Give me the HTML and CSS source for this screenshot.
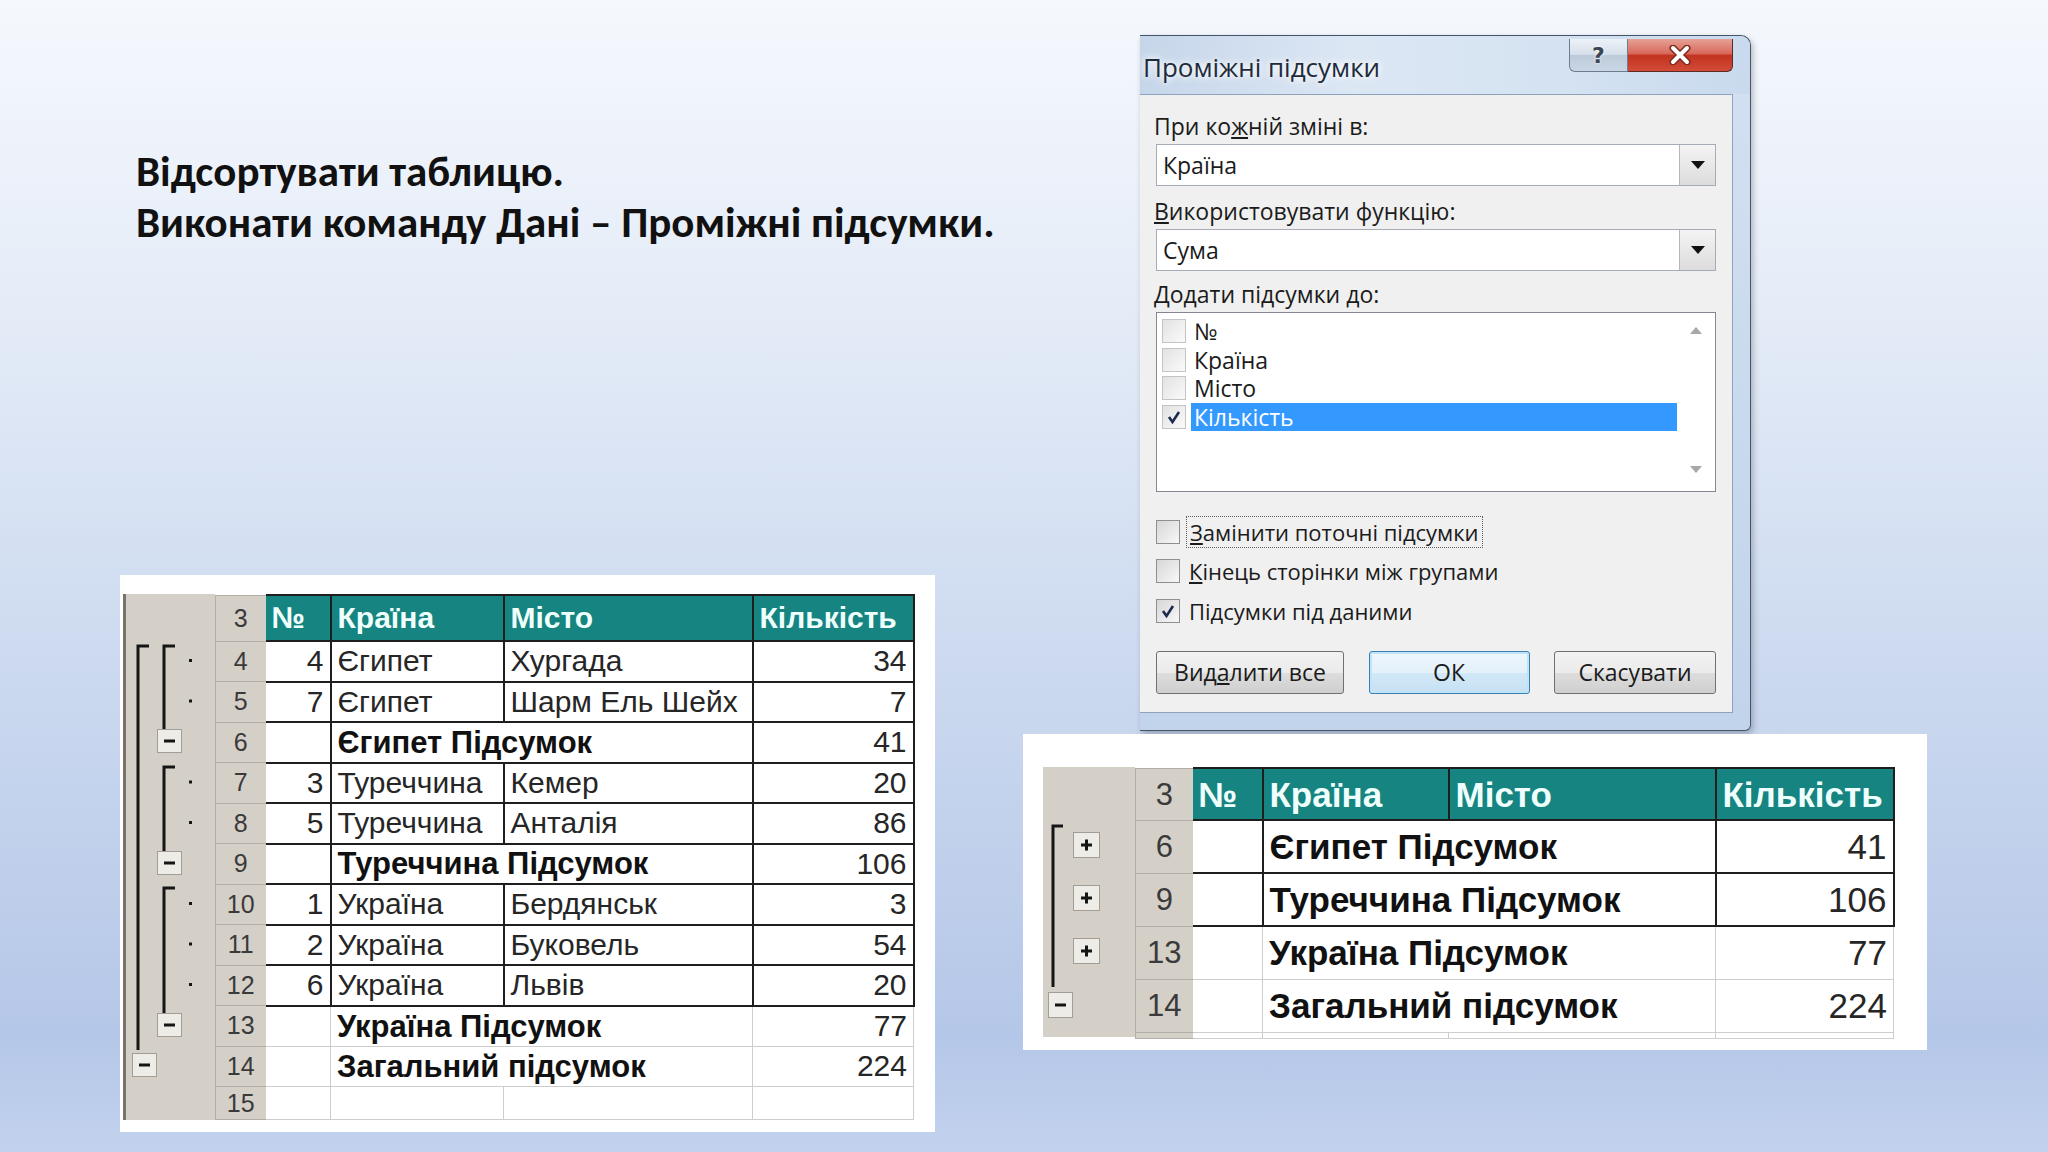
FILE: index.html
```html
<!DOCTYPE html>
<html lang="uk">
<head>
    <meta charset="UTF-8">
    <title>Проміжні підсумки</title>
    <link rel="stylesheet" href="styles.css">
</head>
<body>
<div class="slide">
    <!-- left column: task + expanded sheet -->
    <div class="col-left">
        <div class="task">
            <p>Відсортувати таблицю.</p>
            <p>Виконати команду Дані – Проміжні підсумки.</p>
        </div>

        <div class="sheet sheet-full">
            <svg class="outline" width="92" height="526" viewBox="0 0 92 526">
                <rect x="0" y="0" width="3" height="526" fill="#77736c"/>
                <g fill="none" stroke="#151515" stroke-width="3">
                    <path d="M26 52 H15 V456"/>
                    <path d="M52 52 H41 V135"/>
                    <path d="M52 173 H41 V257"/>
                    <path d="M52 294 H41 V419"/>
                </g>
                <g fill="#eeece6" stroke="#a29e96">
                    <rect x="34.5" y="135.5" width="24" height="23"/>
                    <rect x="34.5" y="257.5" width="24" height="23"/>
                    <rect x="34.5" y="419.5" width="24" height="23"/>
                    <rect x="9.5" y="459.5" width="24" height="23"/>
                </g>
                <g fill="#151515">
                    <rect x="41" y="145.5" width="11" height="3"/>
                    <rect x="41" y="267.5" width="11" height="3"/>
                    <rect x="41" y="429.5" width="11" height="3"/>
                    <rect x="16" y="469.5" width="11" height="3"/>
                    <rect x="66" y="65" width="3" height="3"/>
                    <rect x="66" y="105.5" width="3" height="3"/>
                    <rect x="66" y="186.5" width="3" height="3"/>
                    <rect x="66" y="227" width="3" height="3"/>
                    <rect x="66" y="308" width="3" height="3"/>
                    <rect x="66" y="348.5" width="3" height="3"/>
                    <rect x="66" y="389" width="3" height="3"/>
                </g>
            </svg>
            <table class="grid grid-full">
                <colgroup>
                    <col class="c-rn"><col class="c-no"><col class="c-country"><col class="c-city"><col class="c-qty">
                </colgroup>
                <tr class="r-head"><td class="rn">3</td><th>№</th><th>Країна</th><th>Місто</th><th>Кількість</th></tr>
                <tr><td class="rn">4</td><td class="num">4</td><td>Єгипет</td><td>Хургада</td><td class="num">34</td></tr>
                <tr><td class="rn">5</td><td class="num">7</td><td>Єгипет</td><td>Шарм Ель Шейх</td><td class="num">7</td></tr>
                <tr class="sub"><td class="rn">6</td><td></td><td colspan="2">Єгипет Підсумок</td><td class="num">41</td></tr>
                <tr><td class="rn">7</td><td class="num">3</td><td>Туреччина</td><td>Кемер</td><td class="num">20</td></tr>
                <tr><td class="rn">8</td><td class="num">5</td><td>Туреччина</td><td>Анталія</td><td class="num">86</td></tr>
                <tr class="sub"><td class="rn">9</td><td></td><td colspan="2">Туреччина Підсумок</td><td class="num">106</td></tr>
                <tr><td class="rn">10</td><td class="num">1</td><td>Україна</td><td>Бердянськ</td><td class="num">3</td></tr>
                <tr><td class="rn">11</td><td class="num">2</td><td>Україна</td><td>Буковель</td><td class="num">54</td></tr>
                <tr><td class="rn">12</td><td class="num">6</td><td>Україна</td><td>Львів</td><td class="num">20</td></tr>
                <tr class="sub plain"><td class="rn">13</td><td></td><td colspan="2">Україна Підсумок</td><td class="num">77</td></tr>
                <tr class="sub plain"><td class="rn">14</td><td></td><td colspan="2">Загальний підсумок</td><td class="num">224</td></tr>
                <tr class="plain r-last"><td class="rn">15</td><td></td><td></td><td></td><td></td></tr>
            </table>
        </div>
    </div>

    <!-- right column: dialog + collapsed sheet -->
    <div class="col-right">
        <div class="dialog">
            <div class="titlebar">
                <span class="title">Проміжні підсумки</span>
                <div class="caption-btns">
                    <span class="cap-btn cap-help">?</span>
                    <span class="cap-btn cap-close">
                        <svg width="28" height="20" viewBox="0 0 28 20">
                            <path d="M7 3 L21 17 M21 3 L7 17" stroke="#7b2b22" stroke-width="7" stroke-linecap="round"/>
                            <path d="M7 3 L21 17 M21 3 L7 17" stroke="#fff" stroke-width="4" stroke-linecap="round"/>
                        </svg>
                    </span>
                </div>
            </div>

            <div class="dlg-body">
                <label class="dlg-label">При ко<u>ж</u>ній зміні в:</label>
                <div class="combo">
                    <span class="combo-value">Країна</span>
                    <span class="combo-drop"><svg width="14" height="8" viewBox="0 0 14 8"><path d="M0 0 H14 L7 8 Z" fill="#111"/></svg></span>
                </div>

                <label class="dlg-label gap-1"><u>В</u>икористовувати функцію:</label>
                <div class="combo">
                    <span class="combo-value">Сума</span>
                    <span class="combo-drop"><svg width="14" height="8" viewBox="0 0 14 8"><path d="M0 0 H14 L7 8 Z" fill="#111"/></svg></span>
                </div>

                <label class="dlg-label gap-2"><u>Д</u>одати підсумки до:</label>
                <div class="listbox">
                    <div class="list-items">
                        <div class="item"><span class="chk chk-soft"></span><span class="item-text">№</span></div>
                        <div class="item"><span class="chk chk-soft"></span><span class="item-text">Країна</span></div>
                        <div class="item"><span class="chk chk-soft"></span><span class="item-text">Місто</span></div>
                        <div class="item">
                            <span class="chk chk-soft"><svg width="16" height="16" viewBox="0 0 16 16"><path d="M3 8 L6.5 13 L13 3" fill="none" stroke="#1d2a4f" stroke-width="2.6"/></svg></span>
                            <span class="item-text sel">Кількість</span>
                        </div>
                    </div>
                    <div class="list-scroll">
                        <svg width="12" height="7" viewBox="0 0 12 7"><path d="M0 7 L6 0 L12 7 Z" fill="#a8a8a8"/></svg>
                        <svg width="12" height="7" viewBox="0 0 12 7"><path d="M0 0 L6 7 L12 0 Z" fill="#a8a8a8"/></svg>
                    </div>
                </div>

                <div class="options">
                    <div class="opt"><span class="chk"></span><span class="opt-text focus"><u>З</u>амінити поточні підсумки</span></div>
                    <div class="opt"><span class="chk"></span><span class="opt-text"><u>К</u>інець сторінки між групами</span></div>
                    <div class="opt">
                        <span class="chk"><svg width="16" height="16" viewBox="0 0 16 16"><path d="M3 8 L6.5 13 L13 3" fill="none" stroke="#1d2a4f" stroke-width="2.6"/></svg></span>
                        <span class="opt-text">Підсумки під даними</span>
                    </div>
                </div>

                <div class="dlg-buttons">
                    <span class="btn btn-wide">Вид<u>а</u>лити все</span>
                    <span class="btn btn-ok">ОК</span>
                    <span class="btn">Скасувати</span>
                </div>
            </div>
        </div>

        <div class="sheet sheet-short">
            <svg class="outline" width="92" height="270" viewBox="0 0 92 270">
                <path d="M20 59 H10 V220" fill="none" stroke="#151515" stroke-width="3"/>
                <g fill="#eeece6" stroke="#a29e96">
                    <rect x="30.5" y="65.5" width="26" height="25"/>
                    <rect x="30.5" y="118.5" width="26" height="25"/>
                    <rect x="30.5" y="171.5" width="26" height="25"/>
                    <rect x="5.5" y="225.5" width="24" height="25"/>
                </g>
                <g fill="#151515">
                    <rect x="38" y="76.5" width="11" height="3"/>
                    <rect x="42" y="72.5" width="3" height="11"/>
                    <rect x="38" y="129.5" width="11" height="3"/>
                    <rect x="42" y="125.5" width="3" height="11"/>
                    <rect x="38" y="182.5" width="11" height="3"/>
                    <rect x="42" y="178.5" width="3" height="11"/>
                    <rect x="12" y="236.5" width="11" height="3"/>
                </g>
            </svg>
            <table class="grid grid-short">
                <colgroup>
                    <col class="c-rn"><col class="c-no"><col class="c-country"><col class="c-city"><col class="c-qty">
                </colgroup>
                <tr class="r-head"><td class="rn">3</td><th>№</th><th>Країна</th><th>Місто</th><th>Кількість</th></tr>
                <tr class="sub"><td class="rn">6</td><td></td><td colspan="2">Єгипет Підсумок</td><td class="num">41</td></tr>
                <tr class="sub"><td class="rn">9</td><td></td><td colspan="2">Туреччина Підсумок</td><td class="num">106</td></tr>
                <tr class="sub plain"><td class="rn">13</td><td></td><td colspan="2">Україна Підсумок</td><td class="num">77</td></tr>
                <tr class="sub plain"><td class="rn">14</td><td></td><td colspan="2">Загальний підсумок</td><td class="num">224</td></tr>
                <tr class="plain r-last"><td class="rn"></td><td></td><td></td><td></td><td></td></tr>
            </table>
        </div>
    </div>
</div>
</body>
</html>
```

FILE: styles.css
```css
* {
    box-sizing: border-box;
}

body {
    margin: 0;
    font-family: "Liberation Sans", Arial, sans-serif;
}

/* Slide */
.slide {
    width: 2048px;
    height: 1152px;
    display: flex;
    overflow: hidden;
    background: linear-gradient(to bottom, #f5f8fd 0%, #e6edf8 25%, #cedbf0 55%, #b5c7e8 90%, #c2d2ee 100%);
}

.col-left {
    width: 1023px;
    padding-left: 120px;
}

.col-right {
    width: 904px;
}

.task {
    margin: 146px 0 0 16px;
    font-family: Carlito, Roboto, "Liberation Sans", sans-serif;
    font-weight: bold;
    font-size: 43px;
    line-height: 51px;
    color: #111;
}

.task p {
    margin: 0;
}

/* Sheet pictures */
.sheet {
    display: flex;
    align-items: flex-start;
    background: #fff;
}

.sheet-full {
    width: 815px;
    height: 557px;
    margin-top: 327px;
    padding: 19px 0 0 3px;
}

.sheet-short {
    width: 904px;
    height: 316px;
    margin-top: 3px;
    padding: 33px 0 0 20px;
}

.outline {
    display: block;
    flex-shrink: 0;
    background: #d4d0c8;
}

.grid {
    border-collapse: collapse;
    table-layout: fixed;
    color: #262626;
}

.grid td,
.grid th {
    padding: 0 6px;
    border: 2px solid #1e1e1e;
    white-space: nowrap;
    overflow: hidden;
    text-align: left;
    font-weight: normal;
    line-height: 1;
}

.grid th {
    background: #168480;
    color: #effffd;
    font-weight: bold;
}

.grid .rn {
    background: #d4d0c8;
    color: #3a3a3a;
    text-align: center;
    padding: 0;
    border: 1px solid #b3afa6;
    border-right-style: hidden;
}

.grid .num {
    text-align: right;
}

.grid .sub td[colspan] {
    font-weight: bold;
    color: #111;
}

.grid .plain td:not(.rn) {
    border: 1px solid #cdcdcd;
}

/* expanded sheet */
.grid-full {
    width: 698px;
    font-size: 30px;
}

.grid-full .rn {
    font-size: 25px;
}

.grid-full .sub td[colspan] {
    font-size: 31px;
}

.grid-full tr {
    height: 40.5px;
}

.grid-full .r-head {
    height: 46px;
}

.grid-full .r-last {
    height: 33px;
}

.grid-full .c-rn { width: 50px; }
.grid-full .c-no { width: 65px; }
.grid-full .c-country { width: 173px; }
.grid-full .c-city { width: 249px; }
.grid-full .c-qty { width: 161px; }

/* collapsed sheet */
.grid-short {
    width: 758px;
    font-size: 35px;
}

.grid-short .rn {
    font-size: 31px;
}

.grid-short tr {
    height: 53px;
}

.grid-short .r-head {
    height: 52px;
}

.grid-short .r-last {
    height: 6px;
}

.grid-short .c-rn { width: 57px; }
.grid-short .c-no { width: 70px; }
.grid-short .c-country { width: 186px; }
.grid-short .c-city { width: 267px; }
.grid-short .c-qty { width: 178px; }

/* Dialog */
.dialog {
    width: 611px;
    height: 696px;
    margin: 35px 0 0 117px;
    display: flex;
    flex-direction: column;
    background: linear-gradient(to bottom, #d3e1f1, #c1d4eb);
    border: 1px solid #44546b;
    border-left: none;
    border-radius: 0 10px 6px 0;
    box-shadow: 2px 3px 6px rgba(0, 0, 0, 0.25);
    font-family: "Open Sans", "Noto Sans", sans-serif;
    color: #1b1b1b;
}

.titlebar {
    height: 58px;
    display: flex;
    justify-content: space-between;
    align-items: flex-start;
    padding: 0 17px 0 3px;
    background: linear-gradient(to right, #c6d6ea, #dce7f4 35%, #d4e2f1 70%, #c9daee);
    border-radius: 0 10px 0 0;
}

.title {
    margin-top: 15px;
    font-size: 26px;
    line-height: 32px;
    color: #1f2b3a;
    text-shadow: 0 0 6px #fff, 0 0 10px #fff;
}

.caption-btns {
    display: flex;
    margin-top: 3px;
}

.cap-btn {
    height: 33px;
    display: flex;
    align-items: center;
    justify-content: center;
}

.cap-help {
    width: 59px;
    border: 1px solid #6d7d91;
    border-top: none;
    border-radius: 0 0 0 6px;
    background: linear-gradient(#edf2f8, #d4dee9 50%, #bdcad9 51%, #cad7e5);
    font-family: "DejaVu Sans", sans-serif;
    font-weight: bold;
    font-size: 22px;
    color: #3b4452;
    text-shadow: 0 0 3px #fff;
}

.cap-close {
    width: 105px;
    border: 1px solid #5c2a25;
    border-top: none;
    border-left: none;
    border-radius: 0 0 6px 0;
    background: linear-gradient(#e6a196 0%, #d86a5c 45%, #c2321f 52%, #d34c38 100%);
}

.dlg-body {
    flex: 1;
    margin: 0 17px 17px 0;
    padding: 18px 16px 0 16px;
    background: #f0f0f0;
    border: 1px solid #8ea2bb;
    border-left: none;
}

.dlg-label {
    display: block;
    margin-left: -2px;
    font-size: 23px;
    line-height: 26px;
}

.gap-1 {
    margin-top: 12px;
}

.gap-2 {
    margin-top: 10px;
}

.combo {
    display: flex;
    height: 42px;
    margin-top: 5px;
    background: #fff;
    border: 1px solid #a5acb5;
}

.combo-value {
    flex: 1;
    padding-left: 6px;
    font-size: 23px;
    line-height: 40px;
}

.combo-drop {
    width: 36px;
    display: flex;
    align-items: center;
    justify-content: center;
    border-left: 1px solid #b6b6b6;
    background: linear-gradient(#f4f4f4, #dcdcdc);
}

.listbox {
    display: flex;
    height: 180px;
    margin-top: 5px;
    background: #fff;
    border: 1px solid #828790;
}

.list-items {
    flex: 1;
    padding: 4px 0 0 5px;
}

.item {
    display: flex;
    align-items: center;
    height: 28.5px;
}

.item-text {
    flex: 1;
    margin-left: 5px;
    padding-left: 3px;
    font-size: 23px;
    line-height: 28.5px;
}

.item-text.sel {
    background: #3399ff;
    color: #fff;
}

.list-scroll {
    width: 38px;
    display: flex;
    flex-direction: column;
    justify-content: space-between;
    align-items: center;
    padding: 14px 0 18px;
}

.chk {
    width: 24px;
    height: 24px;
    flex-shrink: 0;
    display: flex;
    align-items: center;
    justify-content: center;
    border: 1px solid #8e8f8f;
    background: linear-gradient(135deg, #d6d6d6, #f8f8f8);
}

.chk-soft {
    border-color: #c4c4c4;
    background: linear-gradient(135deg, #e2e2e2, #fafafa);
}

.options {
    margin-top: 20px;
}

.opt {
    display: flex;
    align-items: center;
    height: 39.5px;
}

.opt-text {
    margin-left: 9px;
    font-size: 22px;
    line-height: 28px;
}

.opt-text.focus {
    margin-left: 6px;
    padding: 1px 3px;
    border: 1px dotted #5d5d5d;
}

.dlg-buttons {
    display: flex;
    justify-content: space-between;
    margin-top: 20px;
}

.btn {
    width: 162px;
    height: 43px;
    display: flex;
    align-items: center;
    justify-content: center;
    font-size: 23px;
    border: 1px solid #707070;
    border-radius: 3px;
    background: linear-gradient(#f2f2f2 0%, #ebebeb 50%, #dddddd 51%, #cfcfcf 100%);
}

.btn-wide {
    width: 188px;
}

.btn-ok {
    width: 161px;
    border-color: #3c7fb1;
    box-shadow: inset 0 0 0 2px #bfe3f8;
    background: linear-gradient(#eef7fc 0%, #e3f1fa 50%, #d2e8f6 51%, #c6e1f3 100%);
}
```
